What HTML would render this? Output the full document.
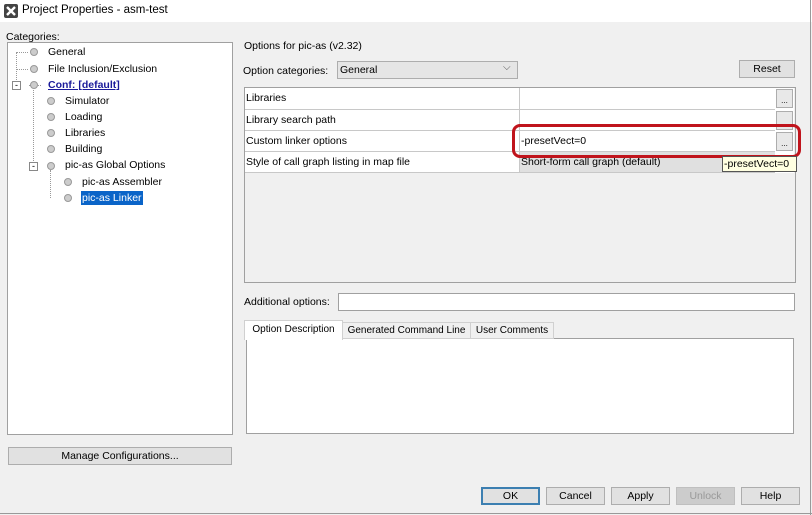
<!DOCTYPE html><html><head><style>
body{margin:0;width:812px;height:515px;background:#f0f0f0;font-family:"Liberation Sans","Noto Sans CJK JP",sans-serif;font-size:10.5px;color:#000;position:relative;overflow:hidden}
.a{position:absolute}
.btn{position:absolute;border:1px solid #adadad;background:#e1e1e1;text-align:center;line-height:16px;height:16px}
.t{white-space:nowrap}
.dot{position:absolute;width:6px;height:6px;border-radius:50%;background:#ccc;border:1px solid #999}
.cell{position:absolute;border-bottom:1px solid #c8c8c8;background:#fff;line-height:21px;padding-left:1px;white-space:nowrap;overflow:hidden}
.eb{position:absolute;width:15px;height:17px;background:#e8e8e8;border:1px solid #adadad;font-size:8px;text-align:center;line-height:22px}
</style></head><body>
<div class="a" style="left:0;top:0;width:812px;height:22px;background:#fff"></div>
<svg class="a" style="left:4px;top:4px" width="14" height="14"><rect width="14" height="14" rx="2" fill="#444"/><path d="M3 3L11 11M11 3L3 11" stroke="#fff" stroke-width="2.4"/></svg>
<div class="a t" style="left:22px;top:4px;font-size:11.5px">Project Properties - asm-test</div>
<div class="a t" style="left:6px;top:31px">Categories:</div>
<div class="a" style="left:7px;top:42px;width:224px;height:391px;background:#fff;border:1px solid #a0a0a0"></div>
<div class="a" style="left:16px;top:52px;height:36px;border-left:1px dotted #999"></div>
<div class="a" style="left:33px;top:90px;height:75px;border-left:1px dotted #999"></div>
<div class="a" style="left:50px;top:170px;height:28px;border-left:1px dotted #999"></div>
<div class="a" style="left:16px;top:52px;width:12px;border-top:1px dotted #999"></div>
<div class="a" style="left:16px;top:69px;width:12px;border-top:1px dotted #999"></div>
<div class="a" style="left:12px;top:81px;width:7px;height:7px;border:1px solid #888;background:#fff;font-size:9px;line-height:6px;text-align:center">-</div>
<div class="a" style="left:29px;top:85px;width:12px;border-top:1px dotted #999"></div>
<div class="dot" style="left:30px;top:48px"></div><div class="a t" style="left:48px;top:46px">General</div>
<div class="dot" style="left:30px;top:65px"></div><div class="a t" style="left:48px;top:63px">File Inclusion/Exclusion</div>
<div class="dot" style="left:30px;top:81px"></div><div class="a t" style="left:48px;top:79px;color:#1a1a9a;font-weight:bold;text-decoration:underline">Conf: [default]</div>
<div class="dot" style="left:47px;top:97px"></div><div class="a t" style="left:65px;top:95px">Simulator</div>
<div class="dot" style="left:47px;top:113px"></div><div class="a t" style="left:65px;top:111px">Loading</div>
<div class="dot" style="left:47px;top:129px"></div><div class="a t" style="left:65px;top:127px">Libraries</div>
<div class="dot" style="left:47px;top:145px"></div><div class="a t" style="left:65px;top:143px">Building</div>
<div class="a" style="left:29px;top:162px;width:7px;height:7px;border:1px solid #888;background:#fff;font-size:9px;line-height:6px;text-align:center">-</div>
<div class="dot" style="left:47px;top:162px"></div><div class="a t" style="left:65px;top:159px">pic-as Global Options</div>
<div class="dot" style="left:64px;top:178px"></div><div class="a t" style="left:82px;top:176px">pic-as Assembler</div>
<div class="dot" style="left:64px;top:194px"></div><div class="a t" style="left:81px;top:191px;background:#0a64c8;color:#fff;padding:1px 1px">pic-as Linker</div>
<div class="btn" style="left:8px;top:447px;width:222px">Manage Configurations...</div>
<div class="a t" style="left:244px;top:40px">Options for pic-as (v2.32)</div>
<div class="a t" style="left:243px;top:65px">Option categories:</div>
<div class="a" style="left:337px;top:61px;width:179px;height:16px;background:#e5e5e5;border:1px solid #adadad"></div>
<div class="a t" style="left:340px;top:64px">General</div><div class="a" style="left:503px;top:62px;font-size:10px;color:#555">⌵</div>
<div class="btn" style="left:739px;top:60px;width:54px">Reset</div>
<div class="a" style="left:244px;top:87px;width:550px;height:194px;background:#f0f0f0;border:1px solid #a0a0a0"></div>
<div class="cell" style="left:245px;top:88px;width:273px;height:21px">Libraries</div>
<div class="cell" style="left:245px;top:110px;width:273px;height:20px">Library search path</div>
<div class="cell" style="left:245px;top:131px;width:273px;height:20px">Custom linker options</div>
<div class="cell" style="left:245px;top:152px;width:273px;height:20px;line-height:20px">Style of call graph listing in map file</div>
<div class="cell" style="left:519px;top:88px;width:256px;height:21px;border-left:1px solid #c8c8c8"></div>
<div class="cell" style="left:519px;top:110px;width:256px;height:20px;border-left:1px solid #c8c8c8"></div>
<div class="cell" style="left:519px;top:131px;width:256px;height:20px;border-left:1px solid #c8c8c8;line-height:20px">-presetVect=0</div>
<div class="cell" style="left:519px;top:152px;width:256px;height:20px;border-left:1px solid #c8c8c8;background:#e0e0e0;line-height:20px">Short-form call graph (default)</div>
<div class="a" style="left:775px;top:88px;width:19px;height:85px;background:#fff"></div>
<div class="eb" style="left:776px;top:89px">...</div>
<div class="eb" style="left:776px;top:111px">...</div>
<div class="eb" style="left:776px;top:132px">...</div>
<div class="a" style="left:512px;top:124px;width:283px;height:28px;border:3px solid #c0141c;border-radius:8px"></div>
<div class="a t" style="left:722px;top:156px;width:72px;height:14px;background:#ffffe1;border:1px solid #555;line-height:14px;padding-left:1px">-presetVect=0</div>
<div class="a t" style="left:244px;top:296px">Additional options:</div>
<div class="a" style="left:338px;top:293px;width:455px;height:16px;background:#fff;border:1px solid #a0a0a0"></div>
<div class="a" style="left:246px;top:338px;width:546px;height:94px;background:#fff;border:1px solid #a0a0a0"></div>
<div class="a t" style="left:244px;top:320px;width:97px;height:19px;background:#fff;border:1px solid #d0d0d0;border-bottom:none;line-height:17px;text-align:center;font-size:10px">Option Description</div>
<div class="a t" style="left:342px;top:322px;width:127px;height:15px;background:#f0f0f0;border:1px solid #d0d0d0;line-height:15px;text-align:center;font-size:10px">Generated Command Line</div>
<div class="a t" style="left:470px;top:322px;width:82px;height:15px;background:#f0f0f0;border:1px solid #d0d0d0;line-height:15px;text-align:center;font-size:10px">User Comments</div>
<div class="btn" style="left:481px;top:487px;width:55px;border:2px solid #3c7fb1;height:14px;line-height:14px">OK</div>
<div class="btn" style="left:546px;top:487px;width:57px">Cancel</div>
<div class="btn" style="left:611px;top:487px;width:57px">Apply</div>
<div class="btn" style="left:676px;top:487px;width:57px;color:#999;background:#ccc;border-color:#bfbfbf">Unlock</div>
<div class="btn" style="left:741px;top:487px;width:57px">Help</div>
<div class="a" style="left:810px;top:0;width:1px;height:515px;background:#999"></div>
<div class="a" style="left:0;top:513px;width:812px;height:1px;background:#999"></div>
</body></html>
